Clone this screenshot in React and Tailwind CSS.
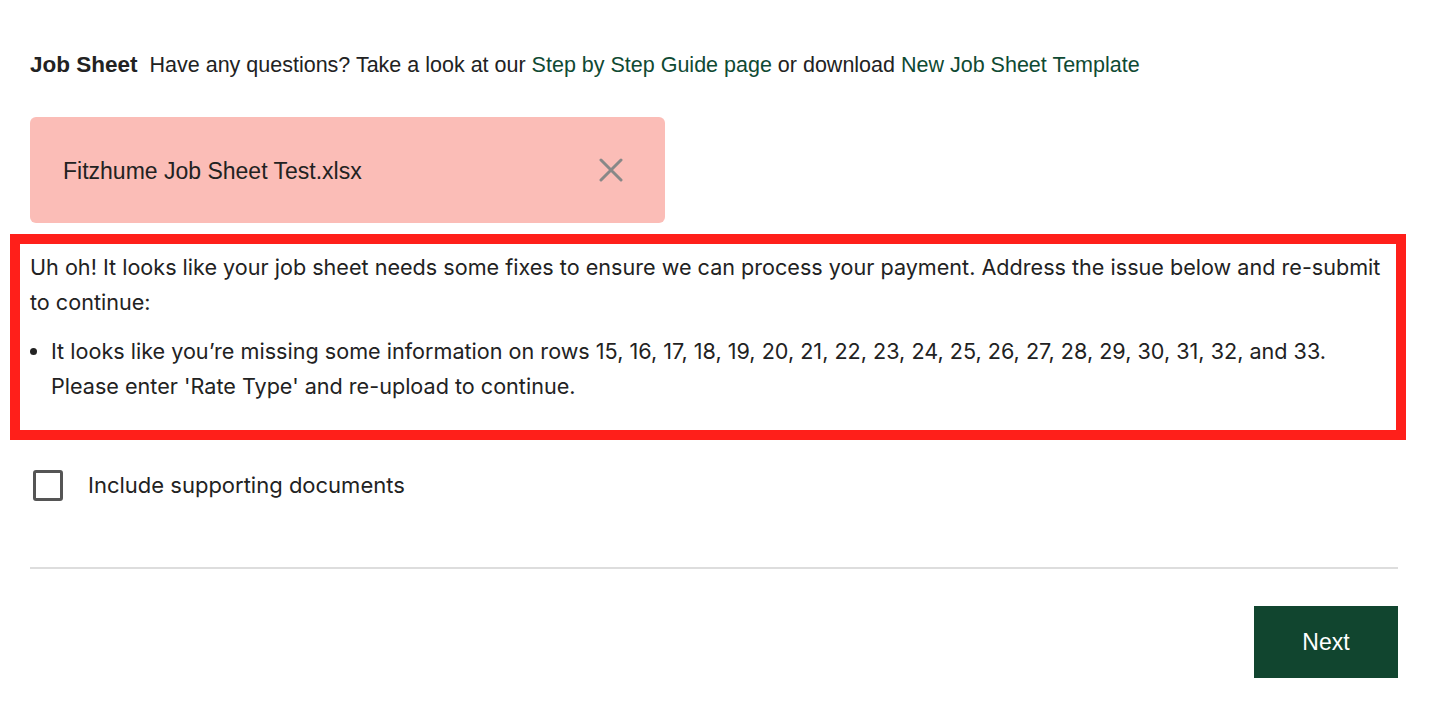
export default function App() {
  return (
    <div className="min-h-screen bg-white pl-[30px] pr-[38px] pt-[50px]" style={{ fontFamily: '"Liberation Sans", Arial, sans-serif' }}>
      {/* Header */}
      <div className="flex items-baseline text-[#222] text-[21.5px] leading-[30px]">
        <span className="font-bold text-[22.5px] mr-[12px]">Job Sheet</span>
        <span>
          Have any questions? Take a look at our{' '}
          <a className="text-[#0f4a33]">Step by Step Guide page</a> or download{' '}
          <a className="text-[#0f4a33]">New Job Sheet Template</a>
        </span>
      </div>

      {/* Uploaded file */}
      <div className="mt-[37px] w-[635px] h-[106px] rounded-[6px] bg-[#fbbdb7] flex items-center justify-between pl-[33px] pr-[42px]">
        <span className="text-[23px] text-[#222] pt-[2px]">Fitzhume Job Sheet Test.xlsx</span>
        <svg width="24" height="24" viewBox="0 0 24 24" fill="none" stroke="#888" strokeWidth="3" strokeLinecap="round">
          <path d="M2 2 L22 22 M22 2 L2 22" />
        </svg>
      </div>

      {/* Error message */}
      <div className="-ml-[20px] -mr-[8px] mt-[11px] border-[10px] border-[#ff1f1a] pl-[10px] pr-[8px] pt-[6px] pb-[26px] text-[21.6px] leading-[35px] text-[#222]" style={{ fontFamily: 'Inter, "Noto Sans", sans-serif' }}>
        <p>
          Uh oh! It looks like your job sheet needs some fixes to ensure we can process your payment. Address the issue below and <span className="whitespace-nowrap">re-submit</span> to continue:
        </p>
        <ul className="mt-[14px] list-disc pl-[21px]">
          <li>
            It looks like you’re missing some information on rows 15, 16, 17, 18, 19, 20, 21, 22, 23, 24, 25, 26, 27, 28, 29, 30, 31, 32, and 33. Please enter 'Rate Type' and re-upload to continue.
          </li>
        </ul>
      </div>

      {/* Checkbox */}
      <label className="mt-[29px] flex items-center gap-[25px] pl-[3px]" style={{ fontFamily: 'Inter, "Noto Sans", sans-serif' }}>
        <span className="w-[30px] h-[31px] rounded-[3px] border-[3px] border-[#555] bg-white"></span>
        <span className="text-[22px] text-[#222]">Include supporting documents</span>
      </label>

      <div className="mt-[65px] h-[2px] bg-[#ddd]"></div>

      <div className="flex justify-end mt-[37px]">
        <button className="w-[144px] h-[72px] bg-[#11452f] text-white text-[23px]">Next</button>
      </div>
    </div>
  );
}
